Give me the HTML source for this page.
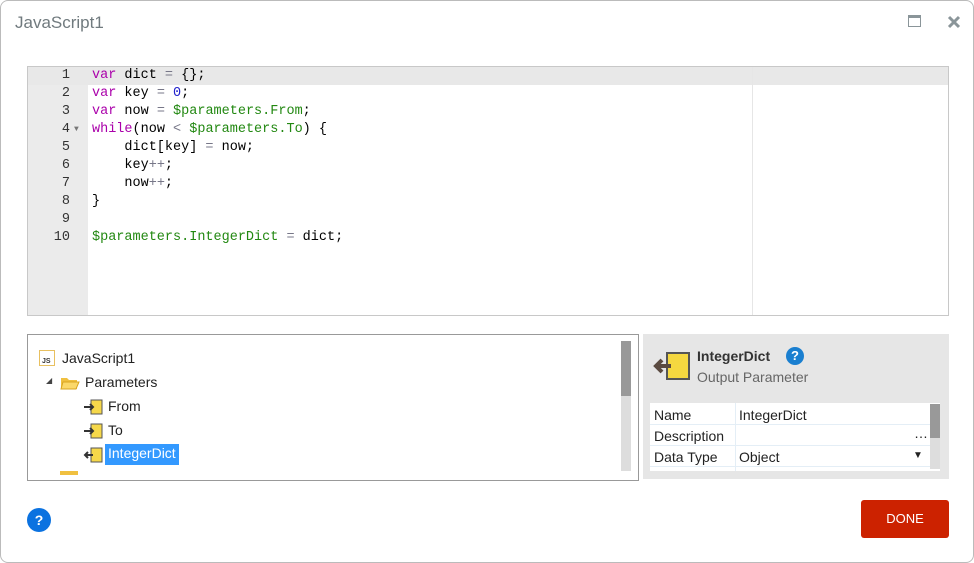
<!DOCTYPE html>
<html><head><style>
*{margin:0;padding:0;box-sizing:border-box}
body{width:974px;height:563px;background:#fff;font-family:"Liberation Sans",sans-serif;position:relative;overflow:hidden}
.dlg{position:absolute;left:0;top:0;width:974px;height:563px;border:1px solid #bbb;border-radius:8px;background:#fff}
.t{position:absolute;left:14px;top:12px;font-size:17px;color:#707a7e}
.ed{position:absolute;left:27px;top:66px;width:922px;height:250px;border:1px solid #c8c8c8;background:#fff}
.gut{position:absolute;left:0;top:0;width:60px;height:248px;background:#ebebeb}
.hl{position:absolute;left:0;top:0;width:920px;height:18px;background:#e8e8e8}
.vl{position:absolute;left:724px;top:0;width:1px;height:248px;background:#e6e6e6}
.ln{position:absolute;left:0;width:42px;text-align:right;font:13.5px "Liberation Mono",monospace;color:#333}
.cd{position:absolute;left:64px;font:13.5px "Liberation Mono",monospace;color:#000;white-space:pre}
.k{color:#a0a}.g{color:#281}.n{color:#22c}.o{color:#778}
.tree{position:absolute;left:27px;top:334px;width:612px;height:147px;border:1px solid #999;font-size:14px;color:#222}
.ti{position:absolute;white-space:nowrap}
.sb{position:absolute;background:#ddd}
.rp{position:absolute;left:643px;top:334px;width:306px;height:145px;background:#e6e6e6}
.tbl{position:absolute;left:7px;top:69px;width:290px;height:68px;background:#fff;font-size:14px;color:#222}
.r{position:absolute;left:4px}
.v{position:absolute;left:89px}
.btn{position:absolute;left:861px;top:500px;width:88px;height:38px;background:#cc2200;border-radius:3px;color:#fff;font-size:13px;text-align:center;line-height:38px}
</style></head><body>
<div class="dlg">
<div class="t">JavaScript1</div>
<svg style="position:absolute;left:907px;top:14px" width="13" height="13"><rect x="0.5" y="0.5" width="12" height="11" fill="none" stroke="#8a9599"/><rect x="0" y="0" width="13" height="3" fill="#8a9599"/></svg>
<svg style="position:absolute;left:946px;top:14px" width="14" height="14"><path d="M2 2L12 12M12 2L2 12" stroke="#8a9599" stroke-width="3"/></svg>
</div>
<div class="ed">
<div class="gut"></div><div class="hl"></div><div class="vl"></div>
<div class="ln" style="top:1px">1</div><div class="ln" style="top:19px">2</div><div class="ln" style="top:37px">3</div><div class="ln" style="top:55px">4<span style="font-size:8px;color:#777;position:absolute;left:46px;top:3px">▼</span></div><div class="ln" style="top:73px">5</div><div class="ln" style="top:91px">6</div><div class="ln" style="top:109px">7</div><div class="ln" style="top:127px">8</div><div class="ln" style="top:145px">9</div><div class="ln" style="top:163px">10</div>
<div class="cd" style="top:1px"><span class="k">var</span> dict <span class="o">=</span> {};</div>
<div class="cd" style="top:19px"><span class="k">var</span> key <span class="o">=</span> <span class="n">0</span>;</div>
<div class="cd" style="top:37px"><span class="k">var</span> now <span class="o">=</span> <span class="g">$parameters.From</span>;</div>
<div class="cd" style="top:55px"><span class="k">while</span>(now <span class="o">&lt;</span> <span class="g">$parameters.To</span>) {</div>
<div class="cd" style="top:73px">    dict[key] <span class="o">=</span> now;</div>
<div class="cd" style="top:91px">    key<span class="o">++</span>;</div>
<div class="cd" style="top:109px">    now<span class="o">++</span>;</div>
<div class="cd" style="top:127px">}</div>
<div class="cd" style="top:163px"><span class="g">$parameters.IntegerDict</span> <span class="o">=</span> dict;</div>
</div>
<div class="tree">
<svg class="ti" style="left:11px;top:15px" width="16" height="16"><rect x="0.5" y="0.5" width="15" height="15" fill="#fff" stroke="#e8c060"/><text x="3" y="13" font-size="7" font-weight="bold" fill="#333" font-family="Liberation Sans">JS</text></svg>
<div class="ti" style="left:34px;top:15px">JavaScript1</div>
<div class="ti" style="left:18px;top:41px;font-size:8px;color:#444">◢</div>
<svg class="ti" style="left:32px;top:40px" width="20" height="16"><path d="M1 3h6l2 2h8v9H1z" fill="#f0c040"/><path d="M3 7h16l-3 7H1z" fill="#fbd86a" stroke="#d9a520"/></svg>
<div class="ti" style="left:57px;top:39px">Parameters</div>
<svg class="ti" style="left:55px;top:64px" width="20" height="16"><rect x="8" y="1" width="11" height="14" fill="#f6d84a" stroke="#555"/><path d="M1 8h9M7 5l3 3-3 3" stroke="#333" stroke-width="2" fill="none"/></svg>
<div class="ti" style="left:80px;top:63px">From</div>
<svg class="ti" style="left:55px;top:88px" width="20" height="16"><rect x="8" y="1" width="11" height="14" fill="#f6d84a" stroke="#555"/><path d="M1 8h9M7 5l3 3-3 3" stroke="#333" stroke-width="2" fill="none"/></svg>
<div class="ti" style="left:80px;top:87px">To</div>
<svg class="ti" style="left:55px;top:112px" width="20" height="16"><rect x="8" y="1" width="11" height="14" fill="#f6d84a" stroke="#555"/><path d="M10 8H2M5 5L2 8l3 3" stroke="#333" stroke-width="2" fill="none"/></svg>
<div class="ti" style="left:77px;top:109px;background:#3399ff;color:#fff;padding:1px 3px;height:21px">IntegerDict</div>
<div class="ti" style="left:32px;top:136px;width:18px;height:4px;background:#f0c040"></div>
<div class="sb" style="left:593px;top:6px;width:10px;height:130px"></div>
<div class="sb" style="left:593px;top:6px;width:10px;height:55px;background:#999"></div>
</div>
<div class="rp">
<svg style="position:absolute;left:10px;top:17px" width="38" height="30"><rect x="14" y="2" width="22" height="26" fill="#f5d840" stroke="#555" stroke-width="2"/><path d="M18 15H4M9 9l-6 6 6 6" stroke="#5a4a40" stroke-width="4" fill="none"/></svg>
<div style="position:absolute;left:54px;top:14px;font-size:14px;font-weight:bold;color:#333">IntegerDict</div>
<div style="position:absolute;left:143px;top:13px;width:18px;height:18px;border-radius:50%;background:#1a7fd0;color:#fff;font-size:13px;font-weight:bold;text-align:center;line-height:18px">?</div>
<div style="position:absolute;left:54px;top:35px;font-size:14px;color:#666">Output Parameter</div>
<div class="tbl">
<div class="r" style="top:4px">Name</div><div class="v" style="top:4px">IntegerDict</div>
<div class="r" style="top:25px">Description</div><div class="v" style="top:22px;left:264px">…</div>
<div class="r" style="top:46px">Data Type</div><div class="v" style="top:46px">Object</div><div style="position:absolute;left:263px;top:47px;font-size:10px">▼</div>
<div style="position:absolute;left:0;top:21px;width:280px;height:1px;background:#e4eef6"></div>
<div style="position:absolute;left:0;top:42px;width:280px;height:1px;background:#e4eef6"></div>
<div style="position:absolute;left:0;top:63px;width:280px;height:1px;background:#e4eef6"></div>
<div style="position:absolute;left:85px;top:0;width:1px;height:68px;background:#e4eef6"></div>
<div class="sb" style="left:280px;top:1px;width:10px;height:65px"></div>
<div class="sb" style="left:280px;top:1px;width:10px;height:34px;background:#999"></div>
</div>
</div>
<div style="position:absolute;left:27px;top:508px;width:24px;height:24px;border-radius:50%;background:#0b72e0;color:#fff;font-size:14px;font-weight:bold;text-align:center;line-height:24px">?</div>
<div class="btn">DONE</div>
</body></html>
